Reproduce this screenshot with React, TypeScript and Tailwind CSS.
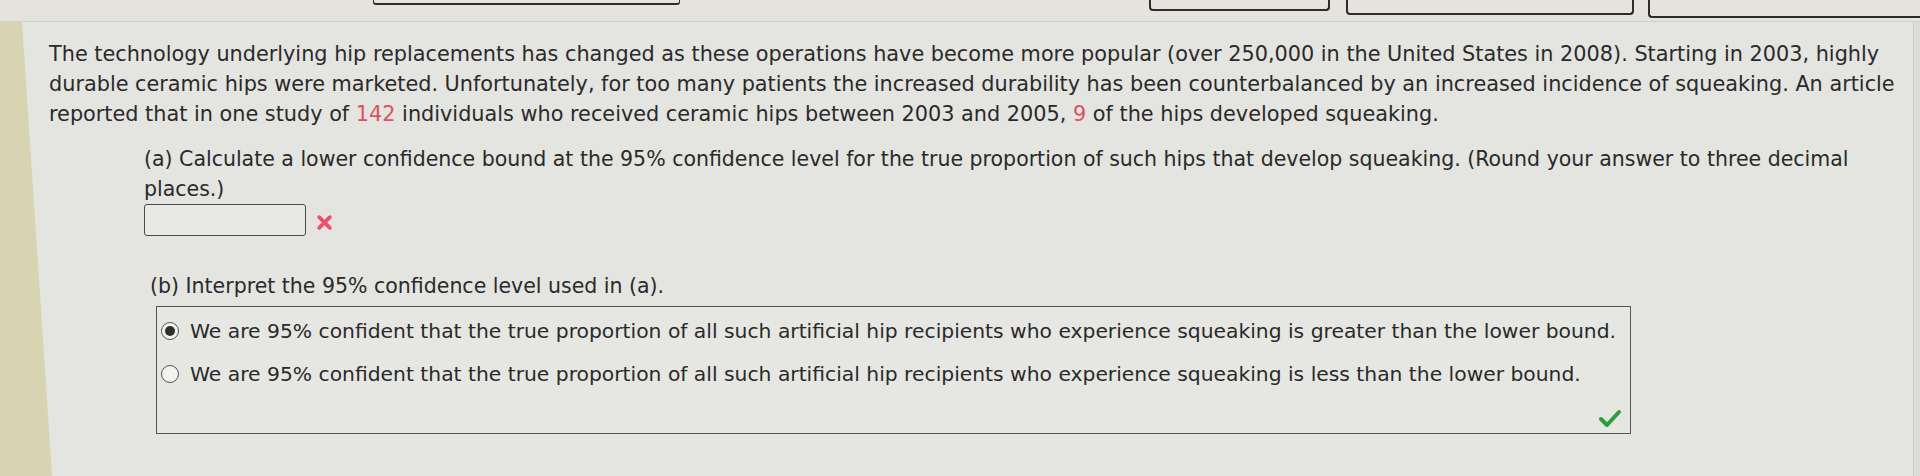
import React from 'react';

function Radio({ checked }: { checked: boolean }) {
  return (
    <span className="flex h-[18px] w-[18px] shrink-0 items-center justify-center rounded-full border-[1.5px] border-[#555] bg-[#f2f2ef]">
      {checked && <span className="h-[10px] w-[10px] rounded-full bg-[#2e2e2e]" />}
    </span>
  );
}

function Cross() {
  return (
    <svg width="17" height="17" viewBox="0 0 16 16" className="ml-[10px] mt-[10px]">
      <path d="M3 3 L13 13 M13 3 L3 13" stroke="#f0506a" strokeWidth="3.6" strokeLinecap="round" />
    </svg>
  );
}

function Check() {
  return (
    <svg width="24" height="20" viewBox="0 0 24 20">
      <path d="M3 11 L9 17 L21 4" fill="none" stroke="#2f9e3a" strokeWidth="4" strokeLinecap="round" strokeLinejoin="round" />
    </svg>
  );
}

export default function App() {
  const options = [
    'We are 95% confident that the true proportion of all such artificial hip recipients who experience squeaking is greater than the lower bound.',
    'We are 95% confident that the true proportion of all such artificial hip recipients who experience squeaking is less than the lower bound.',
  ];

  return (
    <div className="h-[476px] w-[1920px] overflow-hidden bg-[#e4e4e0] font-['DejaVu_Sans',sans-serif] text-[#2a2a2a]">
      {/* top strip with the bottoms of the toolbar buttons */}
      <div className="flex h-[22px] items-start border-b border-[#d2cdc8] bg-[#e6e2de]">
        <div className="ml-[373px] h-[5px] w-[307px] rounded-b-[3px] border-x border-b-2 border-[#2c2c2c]" />
        <div className="ml-[469px] h-[11px] w-[181px] rounded-b-[4px] border-x-2 border-b-2 border-[#2c2c2c]" />
        <div className="ml-[16px] h-[15px] w-[288px] rounded-b-[4px] border-x-2 border-b-2 border-[#2c2c2c]" />
        <div className="ml-[14px] h-[18px] flex-1 rounded-bl-[4px] border-l-2 border-b-2 border-[#2c2c2c]" />
      </div>

      <div className="flex h-[454px]">
        {/* olive side strip, its edge leans in the photo */}
        <div className="w-[52px] shrink-0">
          <div className="h-full bg-[#d8d3b0] [clip-path:polygon(0_0,22px_0,52px_100%,0_100%)]" />
        </div>

        <div className="flex-1 pl-[-3px] pt-[17px]">
          <p className="-ml-[3px] text-[20.8px] leading-[30px]">
            The technology underlying hip replacements has changed as these operations have become more popular (over 250,000 in the United States in 2008). Starting in 2003, highly
            <br />
            durable ceramic hips were marketed. Unfortunately, for too many patients the increased durability has been counterbalanced by an increased incidence of squeaking. An article
            <br />
            reported that in one study of <span className="text-[#d9545c]">142</span> individuals who received ceramic hips between 2003 and 2005,{' '}
            <span className="text-[#d9545c]">9</span> of the hips developed squeaking.
          </p>

          <div className="ml-[92px] mt-[15px]">
            <p className="text-[20.5px] leading-[30px]">
              (a) Calculate a lower confidence bound at the 95% confidence level for the true proportion of such hips that develop squeaking. (Round your answer to three decimal
              <br />
              places.)
            </p>
            <div className="flex">
              <div className="h-[32px] w-[162px] rounded-[3px] border-[1.5px] border-[#4a4a4a] bg-[#e8e8e4]" />
              <Cross />
            </div>

            <p className="ml-[6px] mt-[35px] text-[20.5px] leading-[30px]">(b) Interpret the 95% confidence level used in (a).</p>

            <div className="ml-[12px] mt-[5px] w-[1475px] border-[1.5px] border-[#4d5b4a] bg-[#e6e6e2] pt-[9px]">
              <div className="flex flex-col gap-[13px]">
                {options.map((o, i) => (
                  <div key={i} className="flex h-[30px] items-center gap-[11px] pl-[4px] text-[20.3px]">
                    <Radio checked={i === 0} />
                    <span>{o}</span>
                  </div>
                ))}
              </div>
              <div className="flex justify-end pb-[5px] pr-[8px] pt-[19px]">
                <Check />
              </div>
            </div>
          </div>
        </div>

        <div className="w-[7px] border-l border-[#c9c9c5] bg-[#dcdcd8]" />
      </div>
    </div>
  );
}
